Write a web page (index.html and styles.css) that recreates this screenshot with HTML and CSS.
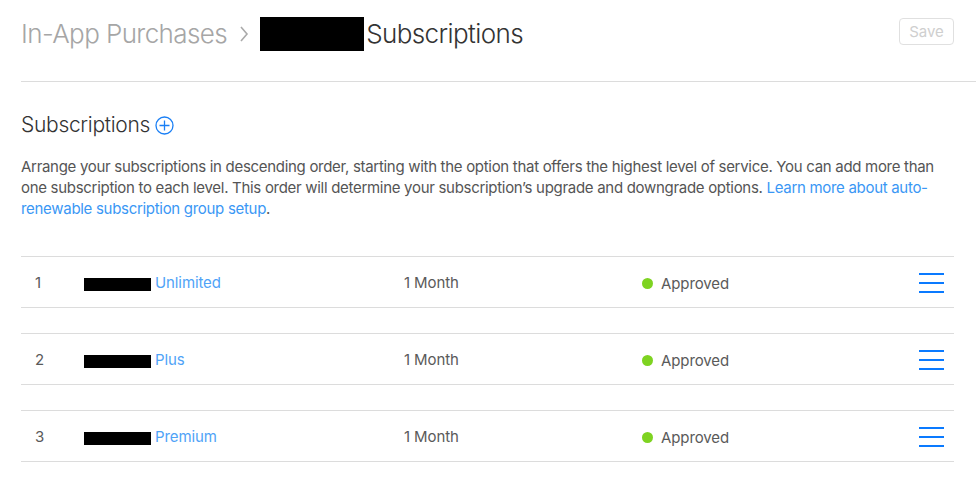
FILE: index.html
```html
<!DOCTYPE html>
<html>
<head>
<meta charset="utf-8">
<link rel="stylesheet" href="styles.css">
</head>
<body>
<header class="topbar">
  <h1 class="crumbs">
    <span class="crumb-parent">In-App Purchases</span>
    <svg class="chev" width="10" height="18" viewBox="0 0 10 18"><path d="M2 2 L8 9 L2 16" fill="none" stroke="#aaa" stroke-width="1.6"/></svg>
    <span class="redact-title"></span><span class="crumb-current">Subscriptions</span>
  </h1>
  <button class="save" disabled>Save</button>
</header>
<main class="content">
  <h2 class="section-title">Subscriptions
    <svg class="plus" width="19" height="19" viewBox="0 0 19 19"><circle cx="9.5" cy="9.5" r="8.5" fill="none" stroke="#1a7ff5" stroke-width="1.3"/><path d="M9.5 4.5 V14.5 M4.5 9.5 H14.5" stroke="#1a7ff5" stroke-width="1.3"/></svg>
  </h2>
  <p class="desc">Arrange your subscriptions in descending order, starting with the option that offers the highest level of service. You can add more than one subscription to each level. This order will determine your subscription’s upgrade and downgrade options. <a class="link">Learn more about auto-</a><a class="link">renewable subscription group setup</a>.</p>
  <div class="levels">
    <div class="row">
      <span class="num">1</span>
      <span class="name"><span class="redact"></span><a class="link">Unlimited</a></span>
      <span class="dur">1 Month</span>
      <span class="status"><span class="dot"></span>Approved</span>
      <span class="grip"><i></i><i></i><i></i></span>
    </div>
    <div class="row">
      <span class="num">2</span>
      <span class="name"><span class="redact"></span><a class="link">Plus</a></span>
      <span class="dur">1 Month</span>
      <span class="status"><span class="dot"></span>Approved</span>
      <span class="grip"><i></i><i></i><i></i></span>
    </div>
    <div class="row">
      <span class="num">3</span>
      <span class="name"><span class="redact"></span><a class="link">Premium</a></span>
      <span class="dur">1 Month</span>
      <span class="status"><span class="dot"></span>Approved</span>
      <span class="grip"><i></i><i></i><i></i></span>
    </div>
  </div>
</main>
</body>
</html>
```
FILE: styles.css
```css
* { box-sizing: border-box; }
body {
  margin: 0;
  background: #fff;
  font-family: "Inter", "Noto Sans", sans-serif;
  color: #555;
}
.topbar {
  margin-left: 21px;
  height: 82px;
  border-bottom: 1px solid #dcdcdc;
  display: flex;
  align-items: flex-start;
  justify-content: space-between;
  padding-right: 22px;
}
.crumbs {
  margin: 0;
  padding-top: 16px;
  display: flex;
  align-items: center;
  font-size: 26px;
  font-weight: 300;
  line-height: 36px;
  letter-spacing: -0.6px;
}
.crumb-parent { color: #a6a6a6; }
.chev { margin: 0 11px 0 12px; }
.redact-title {
  display: inline-block;
  width: 104px;
  height: 34px;
  background: #000;
  margin-right: 2px;
}
.crumb-current { color: #333; }
.save {
  margin-top: 18px;
  width: 55px;
  height: 27px;
  border: 1px solid #e0e0e0;
  border-radius: 4px;
  background: #fff;
  color: #cfcfcf;
  font-family: inherit;
  font-size: 15px;
  padding: 0;
}
.content {
  padding: 0 22px 0 21px;
}
.section-title {
  margin: 29px 0 0;
  font-size: 21px;
  font-weight: 300;
  color: #333;
  line-height: 28px;
  display: flex;
  align-items: center;
  letter-spacing: -0.3px;
}
.plus { margin-left: 5px; margin-top: 1px; }
.desc {
  margin: 17px 0 0;
  font-size: 15px;
  line-height: 21px;
  color: #555;
  letter-spacing: -0.3px;
}
.link { color: #3a97f5; text-decoration: none; }
.levels {
  margin-top: 37px;
  display: flex;
  flex-direction: column;
  gap: 25px;
}
.row {
  height: 52px;
  border-top: 1px solid #dcdcdc;
  border-bottom: 1px solid #dcdcdc;
  display: grid;
  grid-template-columns: 49px 320px 238px 1fr auto;
  align-items: center;
  padding: 0 10px 0 14px;
  font-size: 15px;
  color: #5a5a5a;
  letter-spacing: -0.1px;
}
.name { display: flex; align-items: center; }
.name .link { color: #4fa3f7; }
.redact {
  display: inline-block;
  width: 67px;
  height: 13px;
  background: #000;
  margin-right: 4px;
  margin-top: 4px;
}
.status { display: flex; align-items: center; margin-top: 3px; }
.dot {
  width: 11px;
  height: 11px;
  border-radius: 50%;
  background: #7ed321;
  margin-right: 8px;
}
.grip {
  display: flex;
  flex-direction: column;
  gap: 7px;
  width: 25px;
  margin-top: 2px;
}
.grip i {
  display: block;
  height: 2px;
  background: #0a7aff;
}
```
